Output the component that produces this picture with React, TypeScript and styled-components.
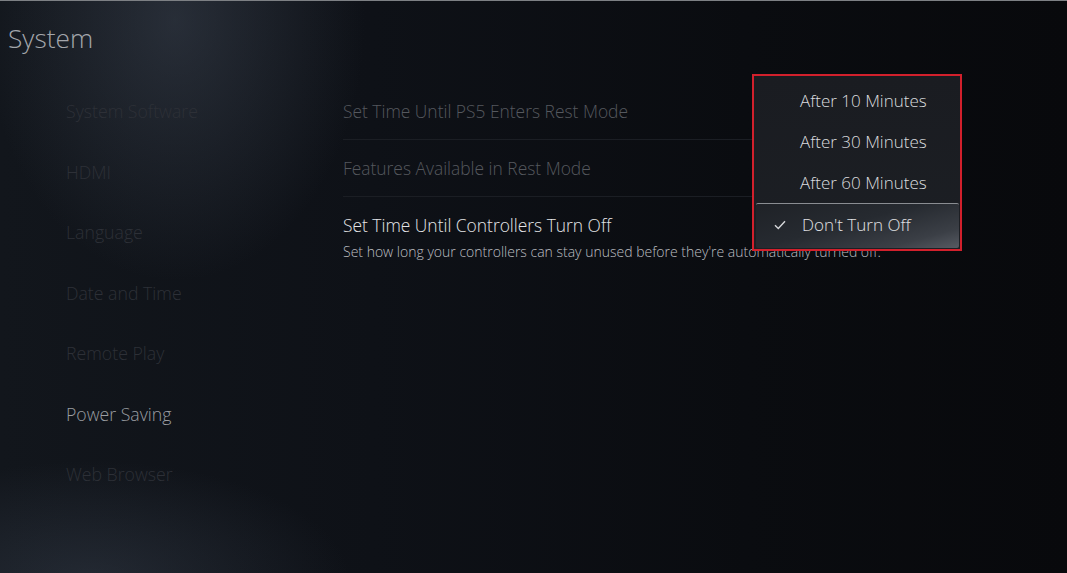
import React from 'react';
import styled, { createGlobalStyle } from 'styled-components';

const GlobalStyle = createGlobalStyle`
  html, body {
    margin: 0;
    padding: 0;
    background: #0b0e13;
  }
  body {
    font-family: 'Open Sans', 'Noto Sans', sans-serif;
  }
`;

const Screen = styled.div`
  position: relative;
  width: 1067px;
  height: 573px;
  overflow: hidden;
  border-top: 1px solid #7d8084;
  box-sizing: border-box;
  background:
    radial-gradient(ellipse 190px 260px at 175px 20px, rgba(78, 88, 104, 0.38), rgba(78, 88, 104, 0) 100%),
    radial-gradient(ellipse 260px 120px at 90px 580px, rgba(70, 80, 96, 0.35), rgba(70, 80, 96, 0) 100%),
    linear-gradient(90deg, #12161c 0%, #0e1117 35%, #0a0c10 70%, #08090c 100%);
  display: flex;
  flex-direction: column;
`;

const Header = styled.header`
  height: 80px;
  box-sizing: border-box;
  padding: 22px 0 0 8px;
`;

const Title = styled.h1`
  margin: 0;
  font-size: 26.3px;
  line-height: 30px;
  font-weight: 300;
  color: #a3a6ab;
`;

const Body = styled.div`
  display: grid;
  grid-template-columns: 343px 1fr;
`;

const Sidebar = styled.nav`
  display: flex;
  flex-direction: column;
  padding-left: 66px;
`;

const NavItem = styled.div<{ $active?: boolean }>`
  height: 60.5px;
  display: flex;
  align-items: center;
  font-size: 17.7px;
  font-weight: 300;
  color: ${(p) => (p.$active ? '#9a9da2' : '#2d3037')};
`;

const Main = styled.main`
  display: flex;
  flex-direction: column;
  padding-top: 2px;
  padding-right: 105px;
`;

const Row = styled.div`
  height: 56px;
  display: flex;
  align-items: center;
  border-bottom: 1px solid #1b1e24;
  font-size: 17.4px;
  font-weight: 300;
  color: #55585e;
`;

const ActiveRow = styled.div`
  padding-top: 17px;
  display: flex;
  flex-direction: column;
`;

const RowTitle = styled.div`
  font-size: 17.4px;
  line-height: 22px;
  font-weight: 300;
  color: #e4e5e7;
`;

const RowSub = styled.div`
  margin-top: 7px;
  font-size: 14px;
  line-height: 18px;
  font-weight: 300;
  color: #bcbec1;
`;

const Dropdown = styled.div`
  position: absolute;
  left: 752px;
  top: 73px;
  width: 210px;
  height: 177px;
  box-sizing: border-box;
  border: 2px solid #d2202c;
  background: linear-gradient(180deg, #1a1c21 0%, #1c1f24 100%);
  padding-top: 4px;
  display: flex;
  flex-direction: column;
`;

const Option = styled.div`
  height: 41px;
  display: flex;
  align-items: center;
  padding-left: 46px;
  font-size: 17px;
  font-weight: 300;
  color: #dadcdf;
`;

const Selected = styled.div`
  height: 45px;
  margin: 0 1px 0 2px;
  box-sizing: border-box;
  border-top: 1px solid #8a8d92;
  border-radius: 2px;
  background: linear-gradient(165deg, #1f2227 0%, #262a30 45%, #3b3f46 80%, #565a62 100%);
  display: flex;
  align-items: center;
  padding: 0 0 3px 18px;
  gap: 16px;
  font-size: 17px;
  font-weight: 300;
  color: #e0e1e4;
`;

const Check = () => (
  <svg width="12" height="10" viewBox="0 0 12 10" fill="none">
    <polyline points="1,5.2 4.3,8.5 11,1.2" stroke="#d6d7da" strokeWidth="1.4" />
  </svg>
);

const navItems = [
  'System Software',
  'HDMI',
  'Language',
  'Date and Time',
  'Remote Play',
  'Power Saving',
  'Web Browser',
];

const options = ['After 10 Minutes', 'After 30 Minutes', 'After 60 Minutes'];

export default function App() {
  return (
    <>
      <GlobalStyle />
      <Screen>
        <Header>
          <Title>System</Title>
        </Header>
        <Body>
          <Sidebar>
            {navItems.map((item) => (
              <NavItem key={item} $active={item === 'Power Saving'}>
                {item}
              </NavItem>
            ))}
          </Sidebar>
          <Main>
            <Row>Set Time Until PS5 Enters Rest Mode</Row>
            <Row>Features Available in Rest Mode</Row>
            <ActiveRow>
              <RowTitle>Set Time Until Controllers Turn Off</RowTitle>
              <RowSub>
                Set how long your controllers can stay unused before they're automatically turned off.
              </RowSub>
            </ActiveRow>
          </Main>
        </Body>
        <Dropdown>
          {options.map((o) => (
            <Option key={o}>{o}</Option>
          ))}
          <Selected>
            <Check />
            Don't Turn Off
          </Selected>
        </Dropdown>
      </Screen>
    </>
  );
}
